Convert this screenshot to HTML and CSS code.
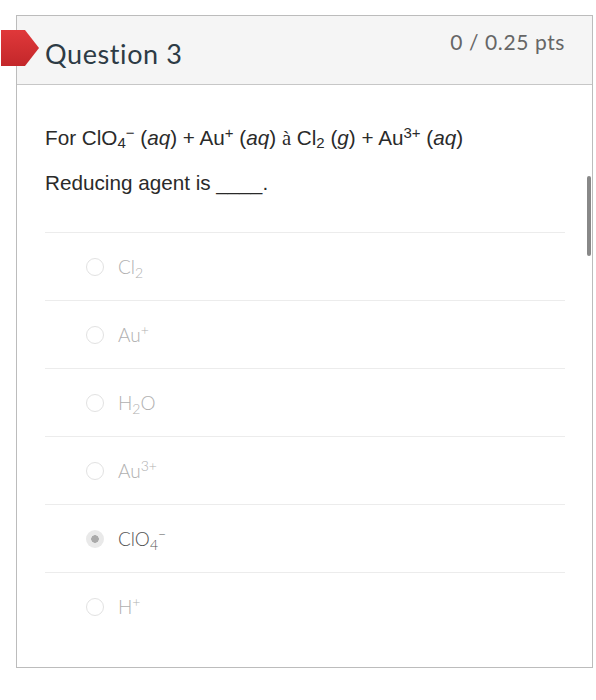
FILE: index.html
```html
<!DOCTYPE html>
<html lang="en">
<head>
    <meta charset="UTF-8">
    <meta name="viewport" content="width=device-width, initial-scale=1.0">
    <title>Question 3</title>
    <link rel="stylesheet" href="styles.css">
</head>
<body>
    <div class="question">
        <div class="flag"></div>
        <div class="header">
            <h2 class="title">Question 3</h2>
            <div class="pts">0 / 0.25 pts</div>
        </div>
        <div class="content">
            <p class="text">For ClO<sub>4</sub><sup>&minus;</sup> (<i>aq</i>) + Au<sup>+</sup> (<i>aq</i>) <span class="arrow">à</span> Cl<sub>2</sub> (<i>g</i>) + Au<sup>3+</sup> (<i>aq</i>)</p>
            <p class="text">Reducing agent is ____.</p>

            <div class="answers">
                <label class="answer"><span class="radio"></span><span>Cl<sub>2</sub></span></label>
                <label class="answer"><span class="radio"></span><span>Au<sup>+</sup></span></label>
                <label class="answer"><span class="radio"></span><span>H<sub>2</sub>O</span></label>
                <label class="answer"><span class="radio"></span><span>Au<sup>3+</sup></span></label>
                <label class="answer selected"><span class="radio"></span><span>ClO<sub>4</sub><sup>&minus;</sup></span></label>
                <label class="answer last"><span class="radio"></span><span>H<sup>+</sup></span></label>
            </div>
        </div>
        <div class="scrollbar"></div>
    </div>
</body>
</html>
```

FILE: styles.css
```css
body { margin: 0; background: #fff; font-family: Lato, "Open Sans", sans-serif; }
.question { position: relative; margin: 15px 0 0 16px; width: 575px; height: 651px; border: 1px solid #bcbcbc; }
.flag { position: absolute; left: -16px; top: 14px; width: 38px; height: 36px; background: linear-gradient(#e0383a, #c3272a); clip-path: polygon(0 0, 24px 0, 38px 50%, 24px 100%, 0 100%); }
.header { height: 68px; background: #f5f5f5; border-bottom: 1px solid #c7c7c7; display: flex; justify-content: space-between; padding: 0 27px 0 28px; }
.title { margin: 0; padding-top: 21px; font-size: 27px; font-weight: 400; color: #2d3b45; letter-spacing: 0.6px; }
.pts { padding-top: 13px; font-size: 21px; color: #666; letter-spacing: 0.6px; }
.content { padding: 38px 27px 0 28px; }
.text { margin: 0 0 15px; font-family: "Liberation Sans", Arial, sans-serif; font-size: 20.7px; line-height: 30px; color: #2a2a2a; }
.text sub, .text sup { font-size: 15px; }
.text sub { vertical-align: -0.2em; }
.text sup { vertical-align: 0.45em; }
.arrow { font-family: "Liberation Serif", serif; }
sub, sup { line-height: 0; }
.answers { margin-top: 34px; border-top: 1px solid #ececec; }
.answer { display: flex; align-items: center; height: 67px; border-bottom: 1px solid #ececec; padding-left: 41px; font-size: 19px; font-weight: 300; color: #b0b0b0; }
.answer.last { border-bottom: none; }
.answer sub, .answer sup { font-size: 14px; }
.answer sub { vertical-align: -0.25em; }
.answer sup { vertical-align: 0.5em; }
.radio { width: 18px; height: 18px; border: 1px solid #e2e2e2; border-radius: 50%; margin-right: 14px; box-sizing: border-box; }
.answer.selected { color: #555; }
.answer.selected .radio { border: none; background: radial-gradient(circle, #aaa 0 3.5px, #e9e9e9 4px); }
.scrollbar { position: absolute; right: 1px; top: 160px; width: 4px; height: 80px; border-radius: 2px; background: #888; }
```
